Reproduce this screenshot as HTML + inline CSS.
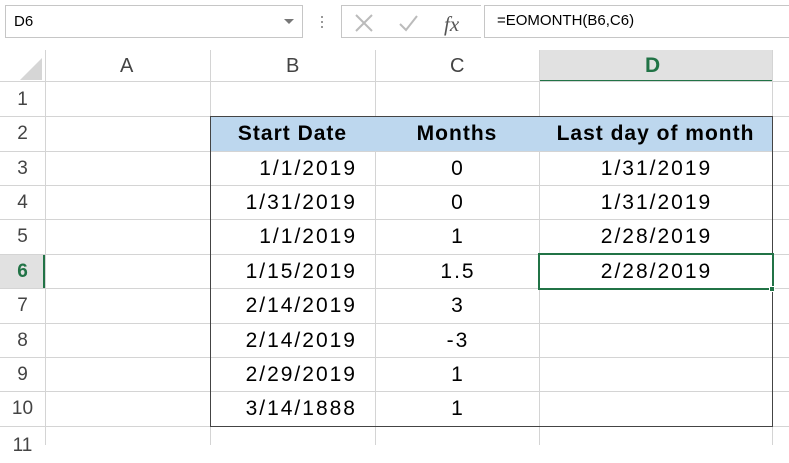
<!DOCTYPE html>
<html><head><style>
*{margin:0;padding:0;box-sizing:border-box}
body{width:789px;height:445px;background:#fff;position:relative;overflow:hidden;font-family:"Liberation Sans",sans-serif;color:#000}
.a{position:absolute}
.h{background:#d4d4d4}
.t{position:absolute;font-size:21px;line-height:34px;height:34px;letter-spacing:2px}
.b{font-weight:bold;letter-spacing:1px}
.rh{position:absolute;left:0;width:45px;text-align:center;font-size:19px;color:#444;line-height:34px}
</style></head><body>
<div class="a" style="left:5px;top:5px;width:298px;height:33px;border:1px solid #c6c6c6"></div>
<div class="a" style="left:14px;top:13px;font-size:15px">D6</div>
<div class="a" style="left:284px;top:19px;width:0;height:0;border-left:5px solid transparent;border-right:5px solid transparent;border-top:5px solid #777"></div>
<div class="a" style="left:321px;top:16px;width:2px;height:2px;background:#999;box-shadow:0 5px #999,0 10px #999"></div>
<div class="a" style="left:341px;top:5px;width:140px;height:33px;border:1px solid #c6c6c6;border-right:none"></div>
<svg class="a" style="left:350px;top:10px" width="130" height="26">
<path d="M6 5 L22 21 M22 5 L6 21" stroke="#bbb" stroke-width="2"/>
<path d="M50 14 L56 20 L67 6" stroke="#bbb" stroke-width="2" fill="none"/>
<text x="94" y="21" font-family="Liberation Serif" font-style="italic" font-size="21" fill="#555">fx</text>
</svg>
<div class="a" style="left:484px;top:5px;width:310px;height:33px;border:1px solid #c6c6c6"></div>
<div class="a" style="left:497px;top:12px;font-size:15px">=EOMONTH(B6,C6)</div>
<div class="a" style="left:539px;top:50px;width:233px;height:32px;background:#e1e1e1;border-bottom:2px solid #217346"></div>
<div class="a" style="left:20px;top:58px;width:0;height:0;border-left:22px solid transparent;border-bottom:22px solid #d6d6d6"></div>
<div class="a" style="left:120px;top:55px;font-size:20px;color:#444">A</div>
<div class="a" style="left:286px;top:55px;font-size:20px;color:#444">B</div>
<div class="a" style="left:450px;top:55px;font-size:20px;color:#444">C</div>
<div class="a" style="left:645px;top:54px;font-size:21px;color:#217346;font-weight:bold">D</div>
<div class="a h" style="left:0;top:81px;width:789px;height:1px"></div>
<div class="a h" style="left:45px;top:50px;width:1px;height:395px"></div>
<div class="a h" style="left:210px;top:50px;width:1px;height:395px"></div>
<div class="a h" style="left:375px;top:50px;width:1px;height:395px"></div>
<div class="a h" style="left:539px;top:50px;width:1px;height:395px"></div>
<div class="a h" style="left:772px;top:50px;width:1px;height:395px"></div>
<div class="a h" style="left:0;top:116px;width:789px;height:1px"></div>
<div class="a h" style="left:0;top:151px;width:789px;height:1px"></div>
<div class="a h" style="left:0;top:185px;width:789px;height:1px"></div>
<div class="a h" style="left:0;top:219px;width:789px;height:1px"></div>
<div class="a h" style="left:0;top:254px;width:789px;height:1px"></div>
<div class="a h" style="left:0;top:288px;width:789px;height:1px"></div>
<div class="a h" style="left:0;top:323px;width:789px;height:1px"></div>
<div class="a h" style="left:0;top:357px;width:789px;height:1px"></div>
<div class="a h" style="left:0;top:391px;width:789px;height:1px"></div>
<div class="a h" style="left:0;top:426px;width:789px;height:1px"></div>
<div class="a" style="left:0;top:255px;width:45px;height:33px;background:#e1e1e1;border-right:2px solid #217346"></div>
<div class="a" style="left:210px;top:116px;width:563px;height:35px;background:#bdd7ee"></div>
<div class="a" style="left:210px;top:116px;width:563px;height:311px;border:1.5px solid #444"></div>
<div class="rh" style="top:83px">1</div>
<div class="rh" style="top:117px">2</div>
<div class="rh" style="top:152px">3</div>
<div class="rh" style="top:186px">4</div>
<div class="rh" style="top:220px">5</div>
<div class="rh" style="top:255px;color:#217346;font-weight:bold">6</div>
<div class="rh" style="top:289px">7</div>
<div class="rh" style="top:324px">8</div>
<div class="rh" style="top:358px">9</div>
<div class="rh" style="top:392px">10</div>
<div class="rh" style="top:429px">11</div>
<div class="t b" style="left:210px;top:117px;width:165px;text-align:center">Start Date</div>
<div class="t b" style="left:375px;top:117px;width:164px;text-align:center">Months</div>
<div class="t b" style="left:539px;top:117px;width:233px;text-align:center">Last day of month</div>
<div class="t" style="left:210px;top:152px;width:147px;text-align:right">1/1/2019</div>
<div class="t" style="left:210px;top:186px;width:147px;text-align:right">1/31/2019</div>
<div class="t" style="left:210px;top:220px;width:147px;text-align:right">1/1/2019</div>
<div class="t" style="left:210px;top:255px;width:147px;text-align:right">1/15/2019</div>
<div class="t" style="left:210px;top:289px;width:147px;text-align:right">2/14/2019</div>
<div class="t" style="left:210px;top:324px;width:147px;text-align:right">2/14/2019</div>
<div class="t" style="left:210px;top:358px;width:147px;text-align:right">2/29/2019</div>
<div class="t" style="left:210px;top:392px;width:147px;text-align:right">3/14/1888</div>
<div class="t" style="left:375px;top:152px;width:166px;text-align:center">0</div>
<div class="t" style="left:375px;top:186px;width:166px;text-align:center">0</div>
<div class="t" style="left:375px;top:220px;width:166px;text-align:center">1</div>
<div class="t" style="left:375px;top:255px;width:166px;text-align:center">1.5</div>
<div class="t" style="left:375px;top:289px;width:166px;text-align:center">3</div>
<div class="t" style="left:375px;top:324px;width:166px;text-align:center">-3</div>
<div class="t" style="left:375px;top:358px;width:166px;text-align:center">1</div>
<div class="t" style="left:375px;top:392px;width:166px;text-align:center">1</div>
<div class="t" style="left:539px;top:152px;width:235px;text-align:center">1/31/2019</div>
<div class="t" style="left:539px;top:186px;width:235px;text-align:center">1/31/2019</div>
<div class="t" style="left:539px;top:220px;width:235px;text-align:center">2/28/2019</div>
<div class="a" style="left:538px;top:253px;width:236px;height:37px;border:2px solid #217346;background:#fff"></div>
<div class="t" style="left:539px;top:255px;width:235px;text-align:center">2/28/2019</div>
<div class="a" style="left:769px;top:286px;width:6px;height:6px;background:#217346;border:1px solid #fff"></div>
</body></html>
